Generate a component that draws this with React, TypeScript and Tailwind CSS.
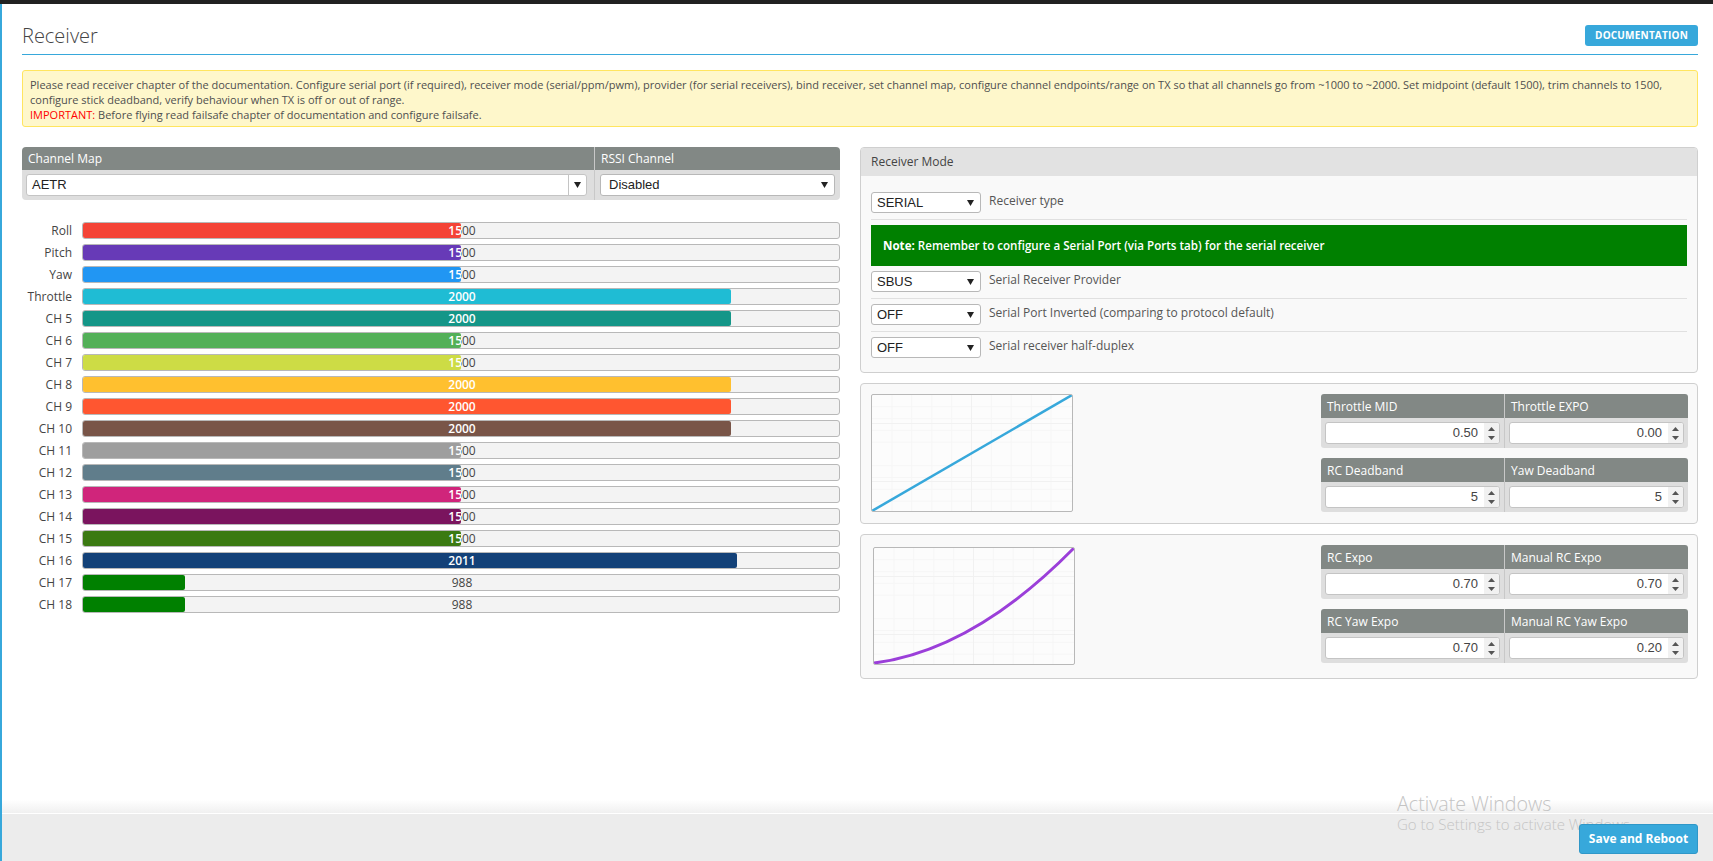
const font = "font-['Open_Sans',sans-serif]";

const channels = [
  { name: "Roll", value: 1500, color: "bg-[#f44336]" },
  { name: "Pitch", value: 1500, color: "bg-[#673ab7]" },
  { name: "Yaw", value: 1500, color: "bg-[#2196f3]" },
  { name: "Throttle", value: 2000, color: "bg-[#1fbcd4]" },
  { name: "CH 5", value: 2000, color: "bg-[#149688]" },
  { name: "CH 6", value: 1500, color: "bg-[#53b058]" },
  { name: "CH 7", value: 1500, color: "bg-[#cddc45]" },
  { name: "CH 8", value: 2000, color: "bg-[#ffc02f]" },
  { name: "CH 9", value: 2000, color: "bg-[#ff5630]" },
  { name: "CH 10", value: 2000, color: "bg-[#795548]" },
  { name: "CH 11", value: 1500, color: "bg-[#9e9e9e]" },
  { name: "CH 12", value: 1500, color: "bg-[#607d8b]" },
  { name: "CH 13", value: 1500, color: "bg-[#d0257b]" },
  { name: "CH 14", value: 1500, color: "bg-[#7a145e]" },
  { name: "CH 15", value: 1500, color: "bg-[#3b7a12]" },
  { name: "CH 16", value: 2011, color: "bg-[#134178]" },
  { name: "CH 17", value: 988, color: "bg-[#008000]" },
  { name: "CH 18", value: 988, color: "bg-[#008000]" },
];

const TRACK = 756;

const Meter = ({ name, value, color }: { name: string; value: number; color: string }) => {
  const fill = Math.round(((value - 800) / 1400) * TRACK);
  return (
    <div className="flex items-center h-[17px]">
      <div className="w-[50px] mr-[10px] text-right text-[12px] text-[#444]">{name}</div>
      <div className="relative flex-1 h-[17px] rounded-[3px] border border-[#b8b8b8] bg-[#f3f3f3]">
        <div className="absolute inset-0 flex items-center justify-center text-[12px] leading-none text-[#444] pl-[2px]">{value}</div>
        <div
          className={`absolute left-0 top-0 bottom-0 overflow-hidden rounded-[2px] ${color}`}
          style={{ width: fill }}
        >
          <div
            className="flex items-center justify-center h-full text-[12px] leading-none font-semibold text-white pl-[2px]"
            style={{ width: TRACK }}
          >
            {value}
          </div>
        </div>
      </div>
    </div>
  );
};

const Select = ({ value, className, pad = "pl-[5px]" }: { value: string; className: string; pad?: string }) => (
  <div className={`flex items-center justify-between bg-white rounded-[3px] border border-[#b8b8b8] font-['Liberation_Sans',sans-serif] text-[13px] text-[#222] ${className}`}>
    <span className={pad}>{value}</span>
    <svg width="7" height="6" viewBox="0 0 7 6" className="mr-[6px]"><path d="M0 0h7L3.5 6z" fill="#222" /></svg>
  </div>
);

const ModeRow = ({ value, label, line }: { value: string; label: string; line?: boolean }) => (
  <div className={`flex items-start h-[28px] mb-[5px] ${line ? "border-b border-[#e0e0e0]" : ""}`}>
    <Select value={value} className="w-[110px] h-[21px]" />
    <div className="ml-[8px] text-[12px] leading-[18px] text-[#555]">{label}</div>
  </div>
);

const NumberInput = ({ value }: { value: string }) => (
  <div className="flex items-stretch h-[22px] flex-1 bg-white rounded-[3px] border border-[#c4c4c4] overflow-hidden font-['Liberation_Sans',sans-serif] text-[13px] text-[#444]">
    <div className="flex-1 flex items-center justify-end pr-[6px]">{value}</div>
    <div className="w-[15px] bg-[#f1f1f1] flex flex-col items-center justify-center gap-[5px]">
      <svg width="7" height="4" viewBox="0 0 7 4"><path d="M3.5 0L7 4H0z" fill="#555" /></svg>
      <svg width="7" height="4" viewBox="0 0 7 4"><path d="M0 0h7L3.5 4z" fill="#555" /></svg>
    </div>
  </div>
);

const TuningTable = ({ left, right }: { left: [string, string]; right: [string, string] }) => (
  <div className="w-[367px] h-[54px] rounded-[3px] overflow-hidden flex text-[12px]">
    {[left, right].map((c, i) => (
      <div key={c[0]} className={`flex-1 flex flex-col ${i === 0 ? "border-r border-[#c8c8c8]" : ""}`}>
        <div className="h-[24px] bg-[#828885] text-white flex items-center pl-[6px] pt-[1px]">{c[0]}</div>
        <div className="flex-1 bg-[#dedede] flex items-center px-[4px]">
          <NumberInput value={c[1]} />
        </div>
      </div>
    ))}
  </div>
);

const Curve = ({ d, color, width }: { d: string; color: string; width: number }) => {
  const vs = [20, 40, 60, 80, 120, 140, 160, 180];
  const hs = [12, 24, 36, 48, 72, 84, 96, 108];
  return (
    <svg width="202" height="118" viewBox="0 0 201 118" preserveAspectRatio="none" className="rounded-[2px] border border-[#b8b8b8] bg-[#fcfcfc]">
      {vs.map((x) => <path key={x} d={`M${x} 0V118`} stroke="#f6f6f6" />)}
      {hs.map((y) => <path key={y} d={`M0 ${y}H201`} stroke="#f6f6f6" />)}
      <path d="M100 0V118M0 29H201M0 88H201" stroke="#f1f1f1" />
      <path d={d} fill="none" stroke={color} strokeWidth={width} />
    </svg>
  );
};

const TuningPanel = ({ children, height, tables }: { children: React.ReactNode; height: string; tables: [[string, string], [string, string]][] }) => (
  <div className={`${height} rounded-[4px] border border-[#cfcfcf] bg-[#f9f9f9] flex justify-between pl-[10px] pr-[9px]`}>
    {children}
    <div className="flex flex-col gap-[10px] pt-[10px]">
      {tables.map((t) => <TuningTable key={t[0][0]} left={t[0]} right={t[1]} />)}
    </div>
  </div>
);

export default function App() {
  return (
    <div className={`relative h-[861px] w-full overflow-hidden flex flex-col bg-white ${font}`}>
      <div className="h-[4px] bg-[#212121]" />
      <div className="flex-1 flex flex-col border-l-2 border-[#37a8db]">
        <main className="flex-1 pl-[20px] pr-[15px]">
          <div className="flex items-start justify-between h-[51px] border-b border-[#37a8db] pt-[21px]">
            <h1 className="text-[20px] leading-[22px] font-light text-[#444]">Receiver</h1>
            <button className="w-[113px] h-[21px] rounded-[3px] bg-[#37a8db] text-white text-[10px] font-bold flex items-center justify-center tracking-[0.2px]">DOCUMENTATION</button>
          </div>

          <div className="mt-[15px] h-[57px] rounded-[3px] border border-[#ffe55f] bg-[#fef7cb] px-[7px] py-[6px] text-[11px] leading-[15px] text-[#4f4f4f]">
            Please read receiver chapter of the documentation. Configure serial port (if required), receiver mode (serial/ppm/pwm), provider (for serial receivers), bind receiver, set channel map, configure channel endpoints/range on TX so that all channels go from ~1000 to ~2000. Set midpoint (default 1500), trim channels to 1500, configure stick deadband, verify behaviour when TX is off or out of range.
            <br />
            <span className="text-[#ff0000]">IMPORTANT:</span> Before flying read failsafe chapter of documentation and configure failsafe.
          </div>

          <div className="flex mt-[20px]">
            <div className="w-[818px] mr-[20px]">
              <div className="h-[53px] rounded-[4px] overflow-hidden flex text-[12px]">
                <div className="w-[573px] flex flex-col border-r border-[#c8c8c8]">
                  <div className="h-[23px] bg-[#828885] text-white flex items-center pl-[6px]">Channel Map</div>
                  <div className="flex-1 bg-[#dedede] flex items-center pl-[4px] pr-[7px]">
                    <div className="flex-1 h-[22px] flex items-center justify-between bg-white rounded-[3px] border border-[#c4c4c4] font-['Liberation_Sans',sans-serif] text-[13px] text-[#222]">
                      <span className="pl-[5px]">AETR</span>
                      <div className="w-[18px] h-full flex items-center justify-center border-l border-[#c4c4c4]">
                        <svg width="7" height="6" viewBox="0 0 7 6"><path d="M0 0h7L3.5 6z" fill="#222" /></svg>
                      </div>
                    </div>
                  </div>
                </div>
                <div className="flex-1 flex flex-col">
                  <div className="h-[23px] bg-[#828885] text-white flex items-center pl-[6px]">RSSI Channel</div>
                  <div className="flex-1 bg-[#dedede] flex items-center pl-[5px] pr-[5px]">
                    <Select value="Disabled" pad="pl-[8px]" className="flex-1 h-[22px]" />
                  </div>
                </div>
              </div>

              <div className="mt-[22px] flex flex-col gap-[5px]">
                {channels.map((c) => <Meter key={c.name} {...c} />)}
              </div>
            </div>

            <div className="flex-1 flex flex-col gap-[10px]">
              <div className="h-[226px] rounded-[4px] border border-[#cfcfcf] bg-[#f9f9f9] overflow-hidden">
                <div className="h-[28px] bg-[#e2e2e2] flex items-center pl-[10px] text-[12px] text-[#444]">Receiver Mode</div>
                <div className="px-[10px] pt-[16px]">
                  <ModeRow value="SERIAL" label="Receiver type" line />
                  <div className="h-[41px] mb-[5px] bg-[#008000] flex items-center pl-[12px] text-[11.6px] font-semibold text-white">
                    <span><span className="font-bold">Note:</span> Remember to configure a Serial Port (via Ports tab) for the serial receiver</span>
                  </div>
                  <ModeRow value="SBUS" label="Serial Receiver Provider" line />
                  <ModeRow value="OFF" label="Serial Port Inverted (comparing to protocol default)" line />
                  <ModeRow value="OFF" label="Serial receiver half-duplex" />
                </div>
              </div>

              <TuningPanel
                height="h-[141px]"
                tables={[
                  [["Throttle MID", "0.50"], ["Throttle EXPO", "0.00"]],
                  [["RC Deadband", "5"], ["Yaw Deadband", "5"]],
                ]}
              >
                <div className="pt-[10px]">
                  <Curve d="M0 118L201 0" color="#37a8db" width={2.5} />
                </div>
              </TuningPanel>

              <TuningPanel
                height="h-[145px]"
                tables={[
                  [["RC Expo", "0.70"], ["Manual RC Expo", "0.70"]],
                  [["RC Yaw Expo", "0.70"], ["Manual RC Yaw Expo", "0.20"]],
                ]}
              >
                <div className="pt-[12px] pl-[2px]">
                  <Curve d="M0 117Q100 104 201 0" color="#9b3fd9" width={3} />
                </div>
              </TuningPanel>
            </div>
          </div>
        </main>

        <footer className="relative h-[48px] border-t border-white bg-[#ececec] flex justify-end items-start pr-[15px] pt-[10px]">
          <div className="absolute left-0 right-0 -top-[14px] h-[13px] bg-gradient-to-b from-white to-[#f0f0f0]" />
          <div className="absolute left-[1395px] -top-[22px] font-light text-[#c4c4c4]">
            <div className="text-[19.7px] leading-[24px]">Activate Windows</div>
            <div className="text-[15px] leading-[17px]">Go to Settings to activate Windows.</div>
          </div>
          <button className="relative w-[119px] h-[30px] rounded-[3px] bg-[#37a8db] border border-[#2f97c8] text-white text-[12px] font-bold">Save and Reboot</button>
        </footer>
      </div>
    </div>
  );
}
